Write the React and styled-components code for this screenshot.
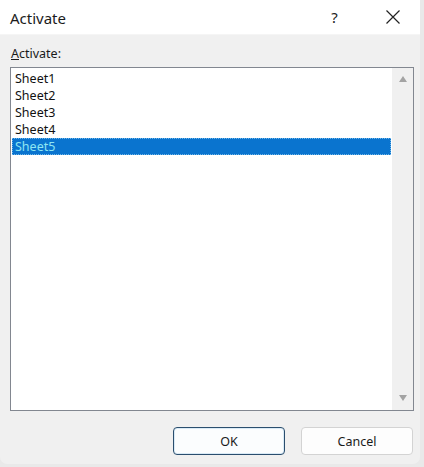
import React, { useState } from 'react';
import styled, { createGlobalStyle } from 'styled-components';

const GlobalStyle = createGlobalStyle`
  html, body {
    margin: 0;
    padding: 0;
    background: #e9e9e9;
  }
  * {
    box-sizing: border-box;
  }
`;

const sheets = ['Sheet1', 'Sheet2', 'Sheet3', 'Sheet4', 'Sheet5'];

function App() {
  const [selected, setSelected] = useState('Sheet5');

  return (
    <>
      <GlobalStyle />
      <Window>
        <TitleBar>
          <Title>Activate</Title>
          <TitleButtons>
            <TitleButton aria-label="Help">?</TitleButton>
            <TitleButton aria-label="Close">
              <svg width="16" height="16" viewBox="0 0 16 16">
                <path d="M1.5 1.5 L14.5 14.5 M14.5 1.5 L1.5 14.5" stroke="#222" strokeWidth="1.2" fill="none" />
              </svg>
            </TitleButton>
          </TitleButtons>
        </TitleBar>
        <Body>
          <Label>
            <u>A</u>ctivate:
          </Label>
          <ListBox>
            <Items>
              {sheets.map((name) => (
                <Item
                  key={name}
                  $selected={name === selected}
                  onClick={() => setSelected(name)}
                >
                  {name}
                </Item>
              ))}
            </Items>
            <ScrollBar>
              <Arrow $up />
              <Arrow />
            </ScrollBar>
          </ListBox>
          <Footer>
            <Button $default>OK</Button>
            <Button>Cancel</Button>
          </Footer>
        </Body>
      </Window>
    </>
  );
}

export default App;

const Window = styled.div`
  width: 420px;
  height: 464px;
  background: #f0f0f0;
  font-family: 'Noto Sans', 'Open Sans', sans-serif;
  color: #1a1a1a;
  display: flex;
  flex-direction: column;
  border-bottom-right-radius: 7px;
  border-bottom-left-radius: 7px;
  overflow: hidden;
`;

const TitleBar = styled.div`
  height: 36px;
  background: #ffffff;
  display: flex;
  align-items: center;
  justify-content: space-between;
  padding-left: 10px;
  border-bottom: 1px solid #f5f5f5;
`;

const Title = styled.span`
  font-size: 15px;
  color: #1b1b1b;
  margin-top: 1px;
`;

const TitleButtons = styled.div`
  display: flex;
  align-items: center;
  height: 100%;
`;

const TitleButton = styled.div`
  width: 58px;
  height: 100%;
  display: flex;
  align-items: center;
  justify-content: center;
  font-size: 15px;
  color: #222;
  padding-left: 3px;
`;

const Body = styled.div`
  flex: 1;
  display: flex;
  flex-direction: column;
  padding: 11px 6px 9px 10px;
`;

const Label = styled.div`
  font-size: 12.5px;
  line-height: 16px;
  margin-left: 1px;
  margin-bottom: 5px;
`;

const ListBox = styled.div`
  height: 344px;
  border: 1px solid #828790;
  background: #ffffff;
  display: flex;
`;

const Items = styled.div`
  flex: 1;
  padding: 2px 1px 0 1px;
`;

const Item = styled.div`
  height: 17px;
  line-height: 17px;
  font-size: 12.5px;
  padding-left: 3px;
  cursor: default;
  background: ${(p) => (p.$selected ? '#0a74cf' : 'transparent')};
  color: ${(p) => (p.$selected ? '#8fe6f2' : '#111')};
  outline: ${(p) => (p.$selected ? '1px dotted #6fb6e8' : 'none')};
  outline-offset: -1px;
`;

const ScrollBar = styled.div`
  width: 21px;
  background: #f0f0f0;
  display: flex;
  flex-direction: column;
  justify-content: space-between;
  align-items: center;
  padding: 8px 0 9px;
`;

const Arrow = styled.div`
  width: 0;
  height: 0;
  border-left: 4.5px solid transparent;
  border-right: 4.5px solid transparent;
  ${(p) =>
    p.$up
      ? 'border-bottom: 6px solid #a3a3a3;'
      : 'border-top: 6px solid #a3a3a3;'}
`;

const Footer = styled.div`
  display: flex;
  justify-content: flex-end;
  gap: 16px;
  margin-top: 16px;
  padding-right: 1px;
`;

const Button = styled.button`
  width: 112px;
  height: 28px;
  font-family: inherit;
  font-size: 12.5px;
  color: #1a1a1a;
  border-radius: 4px;
  background: ${(p) => (p.$default ? '#fbfdfe' : '#fdfdfd')};
  border: 1px solid ${(p) => (p.$default ? '#2a4e6e' : '#d3d3d3')};
  box-shadow: ${(p) => (p.$default ? 'inset 0 0 0 1px #d9eaf6' : 'none')};
`;
